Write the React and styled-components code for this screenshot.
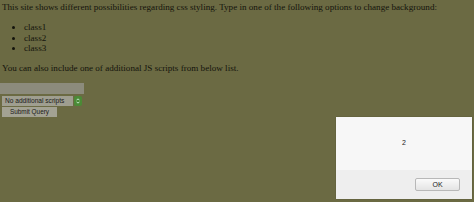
import React from "react";
import styled, { createGlobalStyle } from "styled-components";

const Global = createGlobalStyle`
  html, body { margin: 0; padding: 0; }
  body {
    background: #6b6a43;
    width: 474px;
    height: 202px;
    overflow: hidden;
    font-family: "Liberation Serif", "Times New Roman", serif;
    font-size: 9.1px;
    line-height: 10.8px;
    color: #14140c;
  }
`;

const Page = styled.div`
  position: relative;
  width: 474px;
  height: 202px;
  padding: 2px 2px 0;
  box-sizing: border-box;
`;

const P = styled.p`
  margin: 0 0 9.1px;
`;

const List = styled.ul`
  margin: 0 0 9.1px;
  padding-left: 22px;
  list-style: disc;
`;

const Form = styled.form`
  display: flex;
  flex-direction: column;
  align-items: flex-start;
  margin-top: 0;
  font-family: "Liberation Sans", Arial, sans-serif;
`;

const TextInput = styled.input`
  box-sizing: border-box;
  width: 84px;
  height: 11px;
  margin: 0 0 2px -2px;
  border: none;
  background: #8c8b7c;
  padding: 0;
`;

const SelectWrap = styled.div`
  display: flex;
  align-items: center;
  gap: 1px;
  margin-bottom: 1px;
`;

const Select = styled.div`
  box-sizing: border-box;
  width: 71px;
  height: 10px;
  background: #9f9e90;
  font-size: 6.6px;
  line-height: 10px;
  padding-left: 3px;
  color: #1a1a1a;
  white-space: nowrap;
`;

const Arrow = styled.div`
  width: 8px;
  height: 10px;
  background: #4b8a36;
  border-radius: 2px;
  display: flex;
  align-items: center;
  justify-content: center;
`;

const Button = styled.button`
  box-sizing: border-box;
  width: 55px;
  height: 10px;
  padding: 0;
  border: none;
  background: #a3a293;
  font-family: "Liberation Sans", Arial, sans-serif;
  font-size: 6.4px;
  line-height: 10px;
  color: #1a1a1a;
`;

const Dialog = styled.div`
  position: absolute;
  left: 336px;
  top: 117px;
  width: 136px;
  height: 82px;
  background: #f7f7f7;
  display: flex;
  flex-direction: column;
  font-family: "Liberation Sans", Arial, sans-serif;
  box-shadow: 0 0 1px rgba(0,0,0,0.3);
`;

const Message = styled.div`
  flex: 1;
  display: flex;
  align-items: center;
  justify-content: center;
  font-size: 7px;
  color: #222;
`;

const Footer = styled.div`
  height: 29px;
  background: #eeeeee;
  display: flex;
  align-items: center;
  justify-content: flex-end;
  padding-right: 12px;
`;

const OkButton = styled.div`
  box-sizing: border-box;
  width: 45px;
  height: 13px;
  border: 1px solid #b8b8b8;
  border-radius: 2px;
  background: linear-gradient(#fafafa, #e4e4e4);
  font-size: 7px;
  line-height: 11px;
  text-align: center;
  color: #222;
`;

export default function App() {
  return (
    <>
      <Global />
      <Page>
        <P>
          This site shows different possibilities regarding css styling. Type in one of the following options to change background:
        </P>
        <List>
          <li>class1</li>
          <li>class2</li>
          <li>class3</li>
        </List>
        <P>You can also include one of additional JS scripts from below list.</P>
        <Form onSubmit={(e) => e.preventDefault()}>
          <TextInput type="text" />
          <SelectWrap>
            <Select>No additional scripts</Select>
            <Arrow>
              <svg width="4" height="6" viewBox="0 0 4 6">
                <path d="M0.5 2.3 L2 0.8 L3.5 2.3 M0.5 3.7 L2 5.2 L3.5 3.7" stroke="#dfe" strokeWidth="0.8" fill="none" />
              </svg>
            </Arrow>
          </SelectWrap>
          <Button type="submit">Submit Query</Button>
        </Form>
        <Dialog>
          <Message>2</Message>
          <Footer>
            <OkButton>OK</OkButton>
          </Footer>
        </Dialog>
      </Page>
    </>
  );
}
